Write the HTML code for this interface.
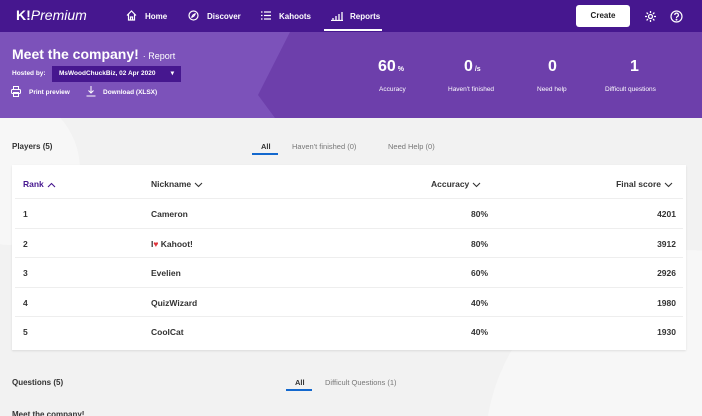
<!DOCTYPE html>
<html><head><meta charset="utf-8"><style>
*{margin:0;padding:0;box-sizing:border-box}
html,body{width:702px;height:416px;overflow:hidden}
body{background:#f2f2f2;font-family:"Liberation Sans",sans-serif;color:#333;position:relative}
.nav{position:absolute;left:0;top:0;width:702px;height:32px;background:#46178f;color:#fff;font-size:8px;font-weight:bold;z-index:2}
.nav span{position:absolute;top:12px}
.hdr{position:absolute;left:0;top:32px;width:702px;height:86px;background:#6d3fab;overflow:hidden;z-index:2}
.hdr .l{position:absolute;left:0;top:0;width:702px;height:86px;background:#7c52ba;clip-path:polygon(0 0,290px 0,258px 63px,275px 86px,0 86px)}
.w{position:absolute;color:#fff}
.stat{position:absolute;top:58px;color:#fff;text-align:center;font-weight:bold;z-index:3}
.card{position:absolute;left:12px;top:165px;width:674px;height:185px;background:#fff;box-shadow:0 1px 2px rgba(0,0,0,.1)}
.row{position:absolute;left:3px;width:668px;height:29.5px;border-top:1px solid #eee;font-size:8.5px;font-weight:bold}
.row span{position:absolute;top:10px;white-space:nowrap}
.row svg{vertical-align:middle;margin-left:3px}
.t{position:absolute;font-size:8px;font-weight:bold}
.w3{z-index:3}
</style></head><body>
<div class="nav">
<span style="left:16px;top:7px;font-size:14px;font-weight:bold">K!<i style="font-weight:normal">Premium</i></span>
<svg style="position:absolute;left:126px;top:10px" width="11" height="11" viewBox="0 0 11 11" fill="none" stroke="#fff" stroke-width="1.2"><path d="M1 5.5L5.5 1 10 5.5M2.5 4v6h6V4M4.5 10V7h2v3"/></svg>
<span style="left:145px">Home</span>
<svg style="position:absolute;left:188px;top:10px" width="11" height="11" viewBox="0 0 11 11" fill="none" stroke="#fff" stroke-width="1.2"><circle cx="5.5" cy="5.5" r="4.5"/><path d="M7.5 3.5L6 6 3.5 7.5 5 5z"/></svg>
<span style="left:207px">Discover</span>
<svg style="position:absolute;left:261px;top:11px" width="10" height="9" viewBox="0 0 10 9" stroke="#fff" stroke-width="1.2"><path d="M0 1h1.5M3 1h7M0 4.5h1.5M3 4.5h7M0 8h1.5M3 8h7"/></svg>
<span style="left:279px">Kahoots</span>
<svg style="position:absolute;left:331px;top:11px" width="12" height="10" viewBox="0 0 12 10" stroke="#fff" stroke-width="1.3"><path d="M0 9.5h12M2 9V7M5 9V5M8 9V3M11 9V1"/></svg>
<span style="left:350px">Reports</span>
<div style="position:absolute;left:324px;top:29px;width:58px;height:2px;background:#fff"></div>
<div style="position:absolute;left:576px;top:5px;width:54px;height:22px;background:#fff;border-radius:3px;color:#222;text-align:center;line-height:22px;font-size:8px">Create</div>
<svg style="position:absolute;left:644px;top:10px" width="13" height="13" viewBox="0 0 13 13" fill="none" stroke="#fff" stroke-width="1.3"><circle cx="6.5" cy="6.5" r="2"/><path d="M6.5 1v2M6.5 10v2M1 6.5h2M10 6.5h2M2.6 2.6l1.4 1.4M9 9l1.4 1.4M2.6 10.4L4 9M9 4l1.4-1.4"/></svg>
<svg style="position:absolute;left:670px;top:10px" width="13" height="13" viewBox="0 0 13 13" fill="none" stroke="#fff" stroke-width="1.2"><circle cx="6.5" cy="6.5" r="5.5"/><path d="M4.8 5a1.8 1.8 0 1 1 2.4 1.6c-.6.3-.7.7-.7 1.4"/><circle cx="6.5" cy="9.6" r=".4" fill="#fff"/></svg>
</div>
<div class="hdr"><div class="l"></div>
<div class="w" style="left:12px;top:14px;font-size:14px;font-weight:bold">Meet the company! <span style="font-size:9px;font-weight:normal">· Report</span></div>
<div class="w" style="left:12px;top:38px;font-size:6.5px;font-weight:bold">Hosted by:</div>
<div class="w" style="left:52px;top:34px;width:129px;height:16px;background:#46178f;font-size:6.5px;font-weight:bold;line-height:16px;padding-left:7px">MsWoodChuckBiz, 02 Apr 2020 <span style="position:absolute;right:7px">▾</span></div>
<svg style="position:absolute;left:11px;top:54px" width="10" height="11" viewBox="0 0 10 11" fill="none" stroke="#fff" stroke-width="1"><rect x="2.5" y=".5" width="5" height="3"/><rect x=".5" y="3.5" width="9" height="4" rx="1"/><rect x="2.5" y="6.5" width="5" height="4"/></svg>
<div class="w" style="left:29px;top:57px;font-size:6.5px;font-weight:bold">Print preview</div>
<svg style="position:absolute;left:86px;top:54px" width="10" height="11" viewBox="0 0 10 11" fill="none" stroke="#fff" stroke-width="1"><path d="M5 0v7M2.5 4.5L5 7l2.5-2.5M.5 10h9"/></svg>
<div class="w" style="left:103px;top:57px;font-size:6.5px;font-weight:bold">Download (XLSX)</div>
</div>
<div class="stat" style="left:378px;top:58px;font-size:16px">60<span style="font-size:7px"> %</span></div>
<div class="stat" style="left:464px;top:58px;font-size:16px">0<span style="font-size:7px"> /s</span></div>
<div class="stat" style="left:548px;top:58px;font-size:16px">0</div>
<div class="stat" style="left:630px;top:58px;font-size:16px">1</div>
<div class="w w3" style="left:379px;top:86px;font-size:6.5px">Accuracy</div>
<div class="w w3" style="left:448px;top:86px;font-size:6.5px">Haven't finished</div>
<div class="w w3" style="left:537px;top:86px;font-size:6.5px">Need help</div>
<div class="w w3" style="left:605px;top:86px;font-size:6.5px">Difficult questions</div>
<div style="position:absolute;left:-60px;top:95px;width:140px;height:150px;border-radius:50%;background:#f7f7f7"></div>
<div style="position:absolute;left:485px;top:250px;width:400px;height:400px;border-radius:50%;background:#f7f7f7"></div>
<div class="t" style="left:12px;top:142px">Players (5)</div>
<div class="t" style="left:261px;top:142px;font-size:7.5px">All</div>
<div style="position:absolute;left:252px;top:153px;width:26px;height:2px;background:#1368ce"></div>
<div class="t" style="left:292px;top:142px;font-size:7.5px;color:#777;font-weight:normal">Haven't finished (0)</div>
<div class="t" style="left:388px;top:142px;font-size:7.5px;color:#777;font-weight:normal">Need Help (0)</div>
<div class="card">
<div class="row" style="top:3px;border:none;height:30px"><span style="left:8px;color:#46178f;top:11px">Rank<svg width="9" height="6" viewBox="0 0 9 6" fill="none" stroke="#46178f" stroke-width="1.1"><path d="M1 5l3.5-3.5L8 5"/></svg></span><span style="left:136px;top:11px">Nickname<svg width="9" height="6" viewBox="0 0 9 6" fill="none" stroke="#333" stroke-width="1.1"><path d="M1 1l3.5 3.5L8 1"/></svg></span><span style="left:416px;top:11px">Accuracy<svg width="9" height="6" viewBox="0 0 9 6" fill="none" stroke="#333" stroke-width="1.1"><path d="M1 1l3.5 3.5L8 1"/></svg></span><span style="right:10px;top:11px">Final score<svg width="9" height="6" viewBox="0 0 9 6" fill="none" stroke="#333" stroke-width="1.1"><path d="M1 1l3.5 3.5L8 1"/></svg></span></div>
<div class="row" style="top:33px"><span style="left:8px">1</span><span style="left:136px">Cameron</span><span style="left:456px">80%</span><span style="right:7px">4201</span></div>
<div class="row" style="top:62.5px"><span style="left:8px">2</span><span style="left:136px">I<span style="color:#e0343c;position:static">♥</span> Kahoot!</span><span style="left:456px">80%</span><span style="right:7px">3912</span></div>
<div class="row" style="top:92px"><span style="left:8px">3</span><span style="left:136px">Evelien</span><span style="left:456px">60%</span><span style="right:7px">2926</span></div>
<div class="row" style="top:121.5px"><span style="left:8px">4</span><span style="left:136px">QuizWizard</span><span style="left:456px">40%</span><span style="right:7px">1980</span></div>
<div class="row" style="top:151px"><span style="left:8px">5</span><span style="left:136px">CoolCat</span><span style="left:456px">40%</span><span style="right:7px">1930</span></div>
</div>
<div class="t" style="left:12px;top:378px">Questions (5)</div>
<div class="t" style="left:295px;top:378px;font-size:7.5px">All</div>
<div style="position:absolute;left:286px;top:389px;width:26px;height:2px;background:#1368ce"></div>
<div class="t" style="left:325px;top:378px;font-size:7.5px;color:#777;font-weight:normal">Difficult Questions (1)</div>
<div class="t" style="left:12px;top:410px">Meet the company!</div>
</body></html>
